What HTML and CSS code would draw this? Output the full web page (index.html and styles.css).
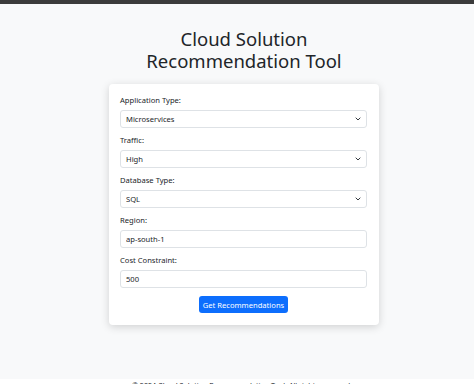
FILE: index.html
```html
<!DOCTYPE html>
<html lang="en">
<head>
<meta charset="utf-8">
<title>Cloud Solution Recommendation Tool</title>
<link rel="stylesheet" href="styles.css">
</head>
<body>
<div class="topbar"></div>
<main class="main">
  <h1 class="title">Cloud Solution<br>Recommendation Tool</h1>
  <form class="card">
    <div class="group">
      <label class="label" for="app">Application Type:</label>
      <div class="select-wrap">
        <select id="app" class="control"><option>Microservices</option></select>
        <svg class="chev" width="6" height="4" viewBox="0 0 6 4"><path d="M0.7 0.7 L3 3 L5.3 0.7" fill="none" stroke="#343a40" stroke-width="1"/></svg>
      </div>
    </div>
    <div class="group">
      <label class="label" for="traffic">Traffic:</label>
      <div class="select-wrap">
        <select id="traffic" class="control"><option>High</option></select>
        <svg class="chev" width="6" height="4" viewBox="0 0 6 4"><path d="M0.7 0.7 L3 3 L5.3 0.7" fill="none" stroke="#343a40" stroke-width="1"/></svg>
      </div>
    </div>
    <div class="group">
      <label class="label" for="db">Database Type:</label>
      <div class="select-wrap">
        <select id="db" class="control"><option>SQL</option></select>
        <svg class="chev" width="6" height="4" viewBox="0 0 6 4"><path d="M0.7 0.7 L3 3 L5.3 0.7" fill="none" stroke="#343a40" stroke-width="1"/></svg>
      </div>
    </div>
    <div class="group">
      <label class="label" for="region">Region:</label>
      <input id="region" class="control" type="text" value="ap-south-1">
    </div>
    <div class="group">
      <label class="label" for="cost">Cost Constraint:</label>
      <input id="cost" class="control" type="text" value="500">
    </div>
    <div class="actions">
      <button type="button" class="btn">Get Recommendations</button>
    </div>
  </form>
</main>
<footer class="footer">© 2024 Cloud Solution Recommendation Tool. All rights reserved.</footer>
</body>
</html>
```
FILE: styles.css
```css
* { box-sizing: border-box; }
html, body { margin: 0; padding: 0; }
body {
  background: #ffffff;
  font-family: "Noto Sans", "Open Sans", sans-serif;
  color: #212529;
  overflow: hidden;
  height: 384px;
}
.topbar {
  height: 4px;
  background: #3b3b3b;
}
.main {
  background: #f8f9fa;
  height: 375px;
  display: flex;
  flex-direction: column;
  align-items: center;
  padding: 24px 0 0 14px;
}
.title {
  margin: 0 0 12px;
  font-size: 18.5px;
  font-weight: 400;
  line-height: 22px;
  text-align: center;
  color: #212529;
}
.card {
  width: 270px;
  background: #ffffff;
  border-radius: 4px;
  box-shadow: 0 2px 8px rgba(0, 0, 0, 0.16);
  padding: 11px 12px 12px 11px;
  display: flex;
  flex-direction: column;
}
.group {
  display: flex;
  flex-direction: column;
  gap: 4px;
  margin-bottom: 7px;
}
.label {
  font-size: 7.6px;
  line-height: 11px;
  color: #212529;
}
.select-wrap { position: relative; }
.control {
  width: 100%;
  height: 18px;
  border: 1px solid #dee2e6;
  border-radius: 3px;
  background: #ffffff;
  padding: 0 5px;
  font-family: inherit;
  font-size: 7.6px;
  color: #212529;
  appearance: none;
  -webkit-appearance: none;
  outline: none;
  margin: 0;
  display: block;
}
.chev {
  position: absolute;
  right: 6px;
  top: 7px;
}
.actions {
  display: flex;
  justify-content: center;
  margin-top: 1px;
}
.btn {
  height: 17px;
  width: 89px;
  padding: 0;
  border: none;
  border-radius: 3px;
  background: #0d6efd;
  color: #ffffff;
  font-family: inherit;
  font-size: 7.6px;
}
.footer {
  text-align: center;
  padding: 1px 0 0 10px;
  font-size: 7.2px;
  line-height: 10px;
  color: #212529;
}
```
